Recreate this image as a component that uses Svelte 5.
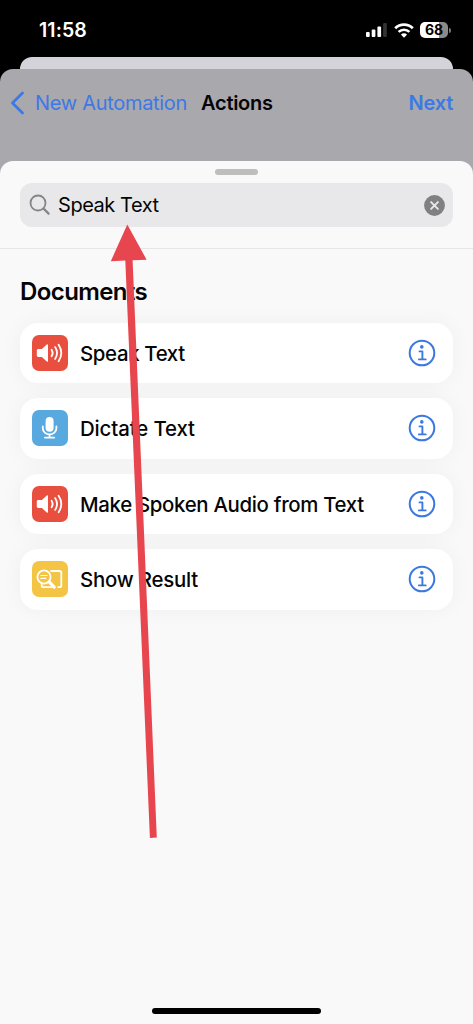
<script lang="ts">
  type Action = { title: string; icon: "speaker" | "mic" | "result"; spacing: number };

  const query = "Speak Text";
  const actions: Action[] = [
    { title: "Speak Text", icon: "speaker", spacing: -0.35 },
    { title: "Dictate Text", icon: "mic", spacing: -0.12 },
    { title: "Make Spoken Audio from Text", icon: "speaker", spacing: -0.32 },
    { title: "Show Result", icon: "result", spacing: -0.2 },
  ];
</script>

<div class="phone">
  <header class="status">
    <time>11:58</time>
    <div class="indicators">
      <svg width="21" height="14" viewBox="0 0 21 14" fill="#fff">
        <rect x="0" y="9" width="3.7" height="5" rx="1" />
        <rect x="5.7" y="6.4" width="3.7" height="7.6" rx="1" />
        <rect x="11.4" y="3.6" width="3.7" height="10.4" rx="1" />
        <rect x="17.1" y="0" width="3.7" height="14" rx="1" fill="#333" />
      </svg>
      <svg class="wifi" width="20" height="15" viewBox="0 0 20 15">
        <g fill="none" stroke="#fff" stroke-width="2.7">
          <path d="M1.2 5.2a12.6 12.6 0 0 1 17.6 0" />
          <path d="M4.6 8.9a7.8 7.8 0 0 1 10.8 0" />
        </g>
        <path d="M10 14.8l-3.1-3.2a4.5 4.5 0 0 1 6.2 0z" fill="#fff" />
      </svg>
      <div class="battery"><span>68</span></div>
    </div>
  </header>

  <div class="peek"></div>
  <nav>
    <a class="back" href="#back">
      <svg width="15" height="24" viewBox="0 0 15 24">
        <path d="M12.5 2L2.5 12l10 10" />
      </svg>
      <span>New Automation</span>
    </a>
    <h1>Actions</h1>
    <a class="next" href="#next">Next</a>
  </nav>

  <main>
    <div class="grabber"></div>
    <div class="search">
      <svg width="22" height="22" viewBox="0 0 22 22" fill="none" stroke="#858589" stroke-linecap="round">
        <circle cx="9" cy="9" r="7.5" stroke-width="1.8" />
        <path d="M14.6 14.6l5 5" stroke-width="2.2" />
      </svg>
      <span class="query">{query}</span>
      <svg width="21" height="21" viewBox="0 0 21 21">
        <circle cx="10.5" cy="10.5" r="10.4" fill="#808084" />
        <path d="M7.1 7.1l6.8 6.8M13.9 7.1l-6.8 6.8" stroke="#e8e8ea" stroke-width="1.9" stroke-linecap="round" />
      </svg>
    </div>

    <section>
      <h2>Documents</h2>
      <ul>
        {#each actions as action}
          <li>
            <span class="icon {action.icon}">
              {#if action.icon === "speaker"}
                <svg viewBox="0 0 36 36" fill="none" stroke="#fff" stroke-width="1.8" stroke-linecap="round">
                  <path
                    d="M6.3 14h3.6l4.9-4.4q1.2-.9 1.2.6v15.6q0 1.5-1.2.6l-4.9-4.4H6.3q-1.5 0-1.5-1.4v-5.2q0-1.4 1.5-1.4z"
                    fill="#fff"
                    stroke="none"
                  />
                  <path d="M19.6 14.7q2.2 3.3 0 6.6" />
                  <path d="M23.1 12.1q3.9 5.9 0 11.8" />
                  <path d="M26.6 9.8q5.4 8.2 0 16.4" />
                </svg>
              {:else if action.icon === "mic"}
                <svg viewBox="0 0 36 36" fill="none" stroke="#fff" stroke-width="1.8" stroke-linecap="round">
                  <rect x="13.6" y="7" width="8" height="14.8" rx="4" fill="#fff" stroke="none" />
                  <path d="M10.8 16.5v1.8a6.8 6.2 0 0 0 13.6 0v-1.8M17.6 24.5v3M12.9 27.6h9.4" />
                </svg>
              {:else}
                <svg viewBox="0 0 36 36" fill="none" stroke="#fff" stroke-width="1.8" stroke-linecap="round" stroke-linejoin="round">
                  <path d="M19 10h8.6q1.7 0 1.7 1.7v12.8q0 1.7-1.7 1.7h-1.4M9.7 23.8v.9q0 1.5 1.5 1.5h8.9" />
                  <circle cx="12" cy="16" r="6.6" />
                  <path d="M8.9 14.5h6.2M8.9 17.4h4.8" stroke-width="1.2" />
                  <path d="M17.2 20.9l5 5.3" stroke-width="3.2" />
                </svg>
              {/if}
            </span>
            <span class="title" style:letter-spacing="{action.spacing}px">{action.title}</span>
            <svg width="28" height="28" viewBox="0 0 28 28" fill="none" stroke="#3b78e0">
              <circle cx="14" cy="14" r="12.3" stroke-width="2" />
              <circle cx="13.8" cy="7.9" r="1.8" fill="#3b78e0" stroke="none" />
              <path d="M11.5 12.4h2.9v7.8M10.9 20.4h6.8" stroke-width="1.9" stroke-linecap="round" stroke-linejoin="round" />
            </svg>
          </li>
        {/each}
      </ul>
    </section>
    <div class="home"></div>
  </main>

  <svg class="arrow" width="473" height="1024" viewBox="0 0 473 1024" fill="#e8464e">
    <path d="M127.3 224.5L146.6 259.7L132.6 260.2L156.8 837.6L149.9 838L125.3 260.5L110.8 261.2z" />
  </svg>
</div>

<style>
  :global(body) {
    margin: 0;
    background: #000;
  }
  .phone {
    position: relative;
    display: flex;
    flex-direction: column;
    width: 473px;
    height: 1024px;
    overflow: hidden;
    background: #000;
    color: #050505;
    font-family: Inter, "Liberation Sans", sans-serif;
    font-size: 20px;
  }
  svg {
    display: block;
    flex: none;
  }
  .status {
    display: flex;
    justify-content: space-between;
    box-sizing: border-box;
    height: 57px;
    padding: 19px 21px 0 39px;
    color: #fff;
  }
  time {
    font-size: 19.5px;
    line-height: 23px;
    font-weight: 600;
    letter-spacing: 0.1px;
  }
  .indicators {
    display: flex;
    align-items: center;
    height: 22px;
  }
  .wifi {
    margin: 0 6px 0 7px;
  }
  .battery {
    position: relative;
    width: 28px;
    height: 16px;
    margin-right: 4px;
    border-radius: 5px;
    background: linear-gradient(to right, #fff 68%, #8a8a8a 68%);
    color: #000;
    font-size: 14px;
    line-height: 16px;
    font-weight: 700;
    text-align: center;
    &::after {
      content: "";
      position: absolute;
      top: 5.5px;
      right: -3px;
      width: 2px;
      height: 5px;
      border-radius: 0 3px 3px 0;
      background: #777;
    }
  }
  .peek {
    height: 12px;
    margin: 0 20px;
    border-radius: 12px 12px 0 0;
    background: #d4d3d9;
  }
  nav {
    display: flex;
    align-items: center;
    box-sizing: border-box;
    height: 112px;
    padding: 0 20px 44px 10px;
    border-radius: 13px 13px 0 0;
    background: #a9a8ad;
  }
  a {
    color: #3c79e6;
    text-decoration: none;
  }
  .back {
    display: flex;
    align-items: center;
    gap: 10px;
    letter-spacing: -0.3px;
    & path {
      fill: none;
      stroke: currentColor;
      stroke-width: 2.8;
      stroke-linecap: round;
      stroke-linejoin: round;
    }
  }
  h1 {
    margin: 0 auto 0 14px;
    font-size: 20px;
    font-weight: 600;
    letter-spacing: -0.3px;
  }
  .next {
    font-weight: 600;
    letter-spacing: -0.2px;
  }
  main {
    display: flex;
    flex: 1;
    flex-direction: column;
    margin-top: -20px;
    border-radius: 13px 13px 0 0;
    background: #f9f9f9;
  }
  .grabber {
    width: 43px;
    height: 6px;
    margin: 8px auto 8px;
    border-radius: 3px;
    background: #bebebf;
  }
  .search {
    display: flex;
    align-items: center;
    height: 44px;
    margin: 0 20px;
    padding: 0 8px 0 9px;
    border-radius: 12px;
    background: #e8e8ea;
  }
  .query {
    flex: 1;
    margin-left: 7px;
    letter-spacing: -0.45px;
  }
  section {
    margin-top: 21px;
    padding: 0 20px;
    border-top: 1px solid #e6e6e7;
  }
  h2 {
    margin: 29px 0 16.5px;
    font-size: 24px;
    line-height: 28px;
    font-weight: 600;
    letter-spacing: -0.6px;
  }
  ul {
    display: grid;
    gap: 15px;
    margin: 0;
    padding: 0;
    list-style: none;
  }
  li {
    display: flex;
    align-items: center;
    box-sizing: border-box;
    height: 60.5px;
    padding: 0 17px 0 12px;
    border-radius: 18px;
    background: #fff;
    box-shadow: 0 0 22px rgba(0, 0, 0, 0.045);
  }
  .icon {
    width: 36px;
    height: 36px;
    border-radius: 7px;
  }
  .speaker {
    background: #e94f3f;
  }
  .mic {
    background: #58a9df;
  }
  .result {
    background: #f4c545;
  }
  .title {
    flex: 1;
    margin-left: 12px;
    padding-top: 1px;
    font-size: 20.4px;
    font-weight: 500;
    white-space: nowrap;
  }
  .home {
    width: 169px;
    height: 6px;
    margin: auto auto 10px;
    border-radius: 3px;
    background: #000;
  }
  .arrow {
    position: absolute;
    inset: 0;
    pointer-events: none;
  }
</style>
